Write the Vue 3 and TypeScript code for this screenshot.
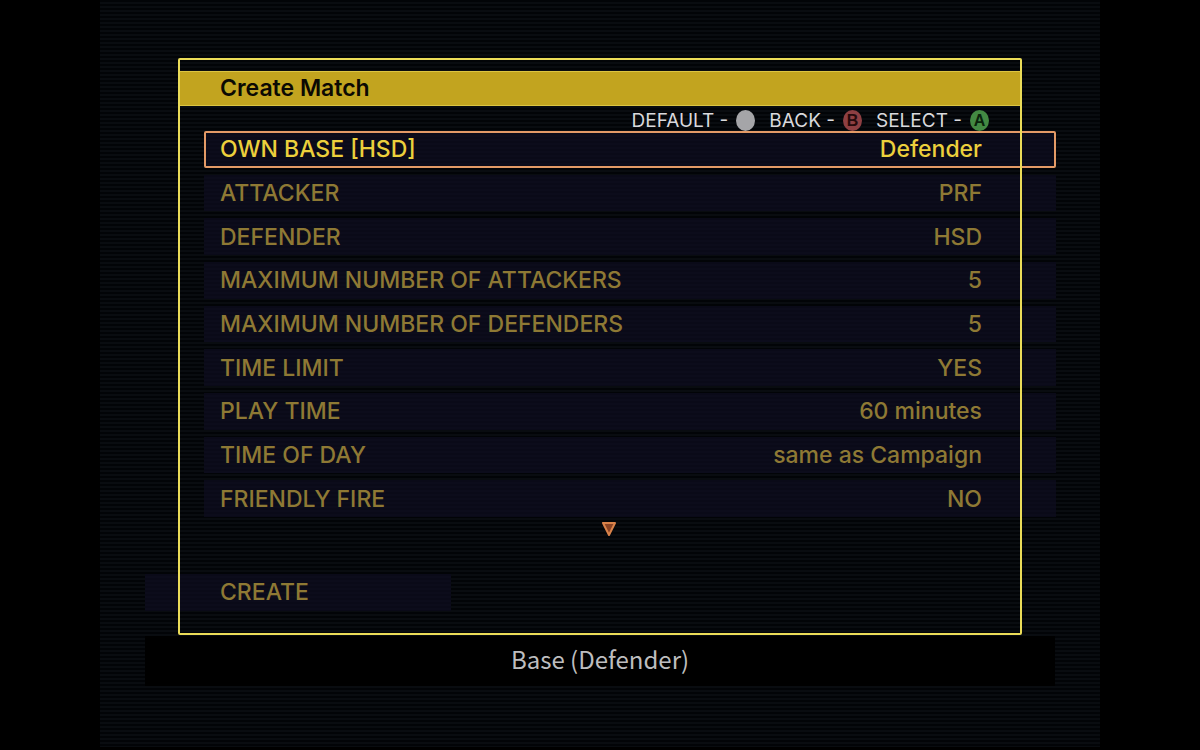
<script setup lang="ts">
import { ref } from 'vue'

interface Option {
  label: string
  value: string
}

interface Hint {
  label: string
  key: string
  tone: string
}

const options: Option[] = [
  { label: 'OWN BASE [HSD]', value: 'Defender' },
  { label: 'ATTACKER', value: 'PRF' },
  { label: 'DEFENDER', value: 'HSD' },
  { label: 'MAXIMUM NUMBER OF ATTACKERS', value: '5' },
  { label: 'MAXIMUM NUMBER OF DEFENDERS', value: '5' },
  { label: 'TIME LIMIT', value: 'YES' },
  { label: 'PLAY TIME', value: '60 minutes' },
  { label: 'TIME OF DAY', value: 'same as Campaign' },
  { label: 'FRIENDLY FIRE', value: 'NO' },
]

const hints: Hint[] = [
  { label: 'DEFAULT', key: '', tone: 'white' },
  { label: 'BACK', key: 'B', tone: 'red' },
  { label: 'SELECT', key: 'A', tone: 'green' },
]

const selected = ref(0)
</script>

<template>
  <div class="screen">
    <main class="stage">
      <section class="frame">
        <h1 class="title">Create Match</h1>
        <div class="hints">
          <button v-for="hint in hints" :key="hint.label" type="button" class="hint">
            <span>{{ hint.label }} -</span>
            <span class="pad" :class="hint.tone">{{ hint.key }}</span>
          </button>
        </div>
        <ul class="options">
          <li v-for="(option, i) in options" :key="option.label">
            <button
              type="button"
              class="option"
              :class="{ active: i === selected }"
              @click="selected = i"
            >
              <span>{{ option.label }}</span>
              <span>{{ option.value }}</span>
            </button>
          </li>
        </ul>
        <button type="button" class="more" aria-label="More options">
          <svg width="16" height="16" viewBox="0 0 16 16" aria-hidden="true">
            <path d="M2 2H14L8 14Z" fill="#8a4324" stroke="#d9824a" stroke-width="2" stroke-linejoin="round" />
          </svg>
        </button>
        <button type="button" class="create">CREATE</button>
      </section>
      <footer class="help">Base (Defender)</footer>
    </main>
  </div>
</template>

<style>
body {
  margin: 0;
  background: #000;
}
</style>

<style scoped>
.screen {
  box-sizing: border-box;
  min-height: 100vh;
  display: flex;
  padding: 0 100px 3px;
  background: #000;
  font-family: Inter, 'Liberation Sans', sans-serif;
}

.stage {
  flex: 1;
  display: flex;
  flex-direction: column;
  padding: 58px 45px 61px;
  background: repeating-linear-gradient(#020407 0 2px, #090c10 2px 4px);
}

.frame {
  position: relative;
  flex: 1;
  display: flex;
  flex-direction: column;
  margin: 0 33px;
  padding: 13px 0 24px;
}

.frame::after {
  content: '';
  position: absolute;
  inset: 0;
  border: 2px solid #ebdc58;
  border-radius: 2px;
  pointer-events: none;
}

button {
  border: 0;
  padding: 0;
  background: none;
  font: inherit;
  color: inherit;
  cursor: pointer;
}

.title {
  margin: 0;
  padding: 0 42px;
  border: solid #dcc542;
  border-width: 1px 0;
  background: #c2a41f;
  color: #0b0903;
  font-size: 23px;
  font-weight: 600;
  line-height: 33px;
}

.hints {
  display: flex;
  justify-content: flex-end;
  gap: 14px;
  height: 25px;
  padding: 0 33px 0 42px;
  color: #d9d9dc;
  font-size: 19px;
}

.hint {
  display: flex;
  align-items: center;
  gap: 8px;
  margin-top: 3px;
}

.pad {
  width: 19px;
  height: 21px;
  border-radius: 50%;
  font-family: 'Liberation Sans', sans-serif;
  font-size: 16px;
  font-weight: 700;
  line-height: 21px;
  text-align: center;
}

.white {
  background: #a5a5a8;
}

.red {
  background: #8e3f42;
  color: #260a0c;
}

.green {
  background: #438a43;
  color: #0a240c;
}

.options {
  flex: 1;
  display: grid;
  grid-auto-rows: 1fr;
  gap: 7px;
  margin: 0 -34px 0 26px;
  padding: 0;
  list-style: none;
}

.options li {
  display: flex;
}

.option {
  flex: 1;
  display: flex;
  align-items: center;
  justify-content: space-between;
  padding: 0 74px 0 16px;
  background: repeating-linear-gradient(#0a0a18 0 2px, #0c0c1b 2px 4px);
  color: #8e7934;
  font-size: 23px;
  font-weight: 500;
}

.active {
  padding: 0 72px 0 14px;
  border: 2px solid #e39a66;
  border-radius: 2px;
  color: #ecd03c;
}

.more {
  align-self: center;
  display: flex;
  margin: 4px 0 37px 17px;
}

.create {
  align-self: flex-start;
  width: 306px;
  margin-left: -33px;
  padding-left: 75px;
  background: repeating-linear-gradient(#0a0a18 0 2px, #0c0c1b 2px 4px);
  color: #8e7934;
  font-size: 23px;
  font-weight: 500;
  line-height: 37px;
  text-align: left;
}

.help {
  margin-top: 1px;
  padding-bottom: 4px;
  background: #000;
  color: #bdbdbf;
  font-family: 'Noto Sans CJK JP', sans-serif;
  font-size: 24px;
  line-height: 46px;
  text-align: center;
}
</style>
